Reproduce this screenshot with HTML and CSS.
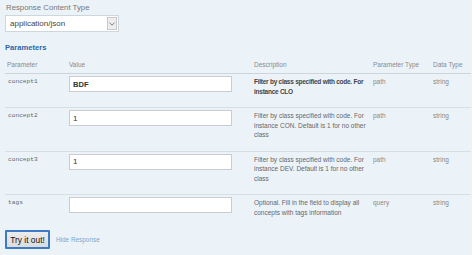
FILE: index.html
```html
<!DOCTYPE html>
<html lang="en">
<head>
    <meta charset="UTF-8">
    <meta name="viewport" content="width=device-width, initial-scale=1.0">
    <title>Operation</title>
    <link rel="stylesheet" href="styles.css">
</head>
<body>
    <div class="operation">
        <!-- tipo de resposta -->
        <div class="content-type">
            <label class="content-label">Response Content Type</label>
            <div class="select-box">
                <span class="select-text">application/json</span>
                <span class="select-arrow">
                    <svg width="6" height="4" viewBox="0 0 6 4"><path d="M0.5 0.8 L3 3.2 L5.5 0.8" fill="none" stroke="#777" stroke-width="1"/></svg>
                </span>
            </div>
        </div>

        <h4 class="params-title">Parameters</h4>

        <table class="params">
            <thead>
                <tr>
                    <th class="col-name">Parameter</th>
                    <th class="col-value">Value</th>
                    <th class="col-desc">Description</th>
                    <th class="col-ptype">Parameter Type</th>
                    <th class="col-dtype">Data Type</th>
                </tr>
            </thead>
            <tbody>
                <tr>
                    <td class="code">concept1</td>
                    <td><input class="param-input required" type="text" value="BDF"></td>
                    <td class="desc strong">Filter by class specified with code. For instance CLO</td>
                    <td>path</td>
                    <td>string</td>
                </tr>
                <tr>
                    <td class="code">concept2</td>
                    <td><input class="param-input" type="text" value="1"></td>
                    <td class="desc">Filter by class specified with code. For instance CON. Default is 1 for no other class</td>
                    <td>path</td>
                    <td>string</td>
                </tr>
                <tr>
                    <td class="code">concept3</td>
                    <td><input class="param-input" type="text" value="1"></td>
                    <td class="desc">Filter by class specified with code. For instance DEV. Default is 1 for no other class</td>
                    <td>path</td>
                    <td>string</td>
                </tr>
                <tr class="last">
                    <td class="code">tags</td>
                    <td><input class="param-input" type="text" value=""></td>
                    <td class="desc">Optional. Fill in the field to display all concepts with tags information</td>
                    <td>query</td>
                    <td>string</td>
                </tr>
            </tbody>
        </table>

        <div class="submit">
            <button class="try-btn">Try it out!</button>
            <a href="#" class="hide-link">Hide Response</a>
        </div>
    </div>
</body>
</html>
```

FILE: styles.css
```css
:root{
    --cor-bg: #ebf3f9;
    --cor-line: #d6dfe6;
    --cor-text: #666;
    --cor-head: #8a8a8a;
    --cor-blue: #2b67a8;
    --cor-link: #7ba7d0;

    --font-f: 'Liberation Sans', Arial, sans-serif;
    --font-m: 'Liberation Mono', 'DejaVu Sans Mono', monospace;
}

*{
    margin: 0px;
    padding: 0px;
    box-sizing: border-box;
}

body{
    background-color: white;
    font-family: var(--font-f);
}

.operation{
    width: 472px;
    height: 255px;
    background-color: var(--cor-bg);
    padding: 3px 0px 0px 5px;
}

.content-label{
    display: block;
    font-size: 7.8px;
    line-height: 10px;
    color: #777;
    padding-left: 1px;
}

.select-box{
    display: flex;
    align-items: center;
    justify-content: space-between;
    width: 114px;
    height: 17px;
    margin-top: 2px;
    background-color: white;
    border: 1px solid #cfd6dc;
}

.select-text{
    font-size: 8px;
    color: #444;
    padding-left: 4px;
}

.select-arrow{
    display: flex;
    align-items: center;
    justify-content: center;
    width: 10px;
    height: 13px;
    margin-right: 1px;
    background-color: #eee;
    border: 1px solid #c8c8c8;
}

.params-title{
    margin-top: 11px;
    font-size: 7.6px;
    line-height: 10px;
    color: var(--cor-blue);
    font-weight: 700;
}

.params{
    table-layout: fixed;
    border-collapse: collapse;
    width: 466px;
    margin-top: 2px;
}

.params th{
    text-align: left;
    font-weight: 400;
    font-size: 6.5px;
    line-height: 8px;
    color: var(--cor-head);
    padding: 6px 2px 4px 2px;
    border-bottom: 1px solid #cdd5dc;
}

.col-name{ width: 62px; }
.col-value{ width: 185px; }
.col-desc{ width: 119px; }
.col-ptype{ width: 60px; }
.col-dtype{ width: 40px; }

.params td{
    vertical-align: top;
    font-size: 6.5px;
    line-height: 9.5px;
    color: #888;
    padding: 3px 2px 11px 2px;
    border-bottom: 1px solid var(--cor-line);
}

.params tr.last td{
    border-bottom: none;
}

.params td.code{
    font-family: var(--font-m);
    font-size: 6.2px;
    color: #666;
    padding-left: 3px;
}

.params td.desc{
    color: var(--cor-text);
}

.params td.strong{
    font-weight: 700;
    color: #444;
    letter-spacing: -0.25px;
}

.param-input{
    display: block;
    width: 163px;
    height: 16px;
    margin-top: -1px;
    border: 1px solid #c9ccd0;
    background-color: white;
    font-family: var(--font-f);
    font-size: 8px;
    color: #333;
    padding-left: 3px;
}

.param-input.required{
    font-weight: 700;
    font-size: 7.6px;
}

.submit{
    display: flex;
    align-items: center;
    margin-top: 2px;
}

.try-btn{
    width: 45px;
    height: 19px;
    font-family: var(--font-f);
    font-size: 8.4px;
    color: #111;
    background-image: linear-gradient(#ececec, #dcdcdc);
    border: 2px solid #3d7cc4;
    border-radius: 1px;
}

.hide-link{
    margin-left: 6px;
    font-size: 6.4px;
    color: var(--cor-link);
    text-decoration: none;
}
```
